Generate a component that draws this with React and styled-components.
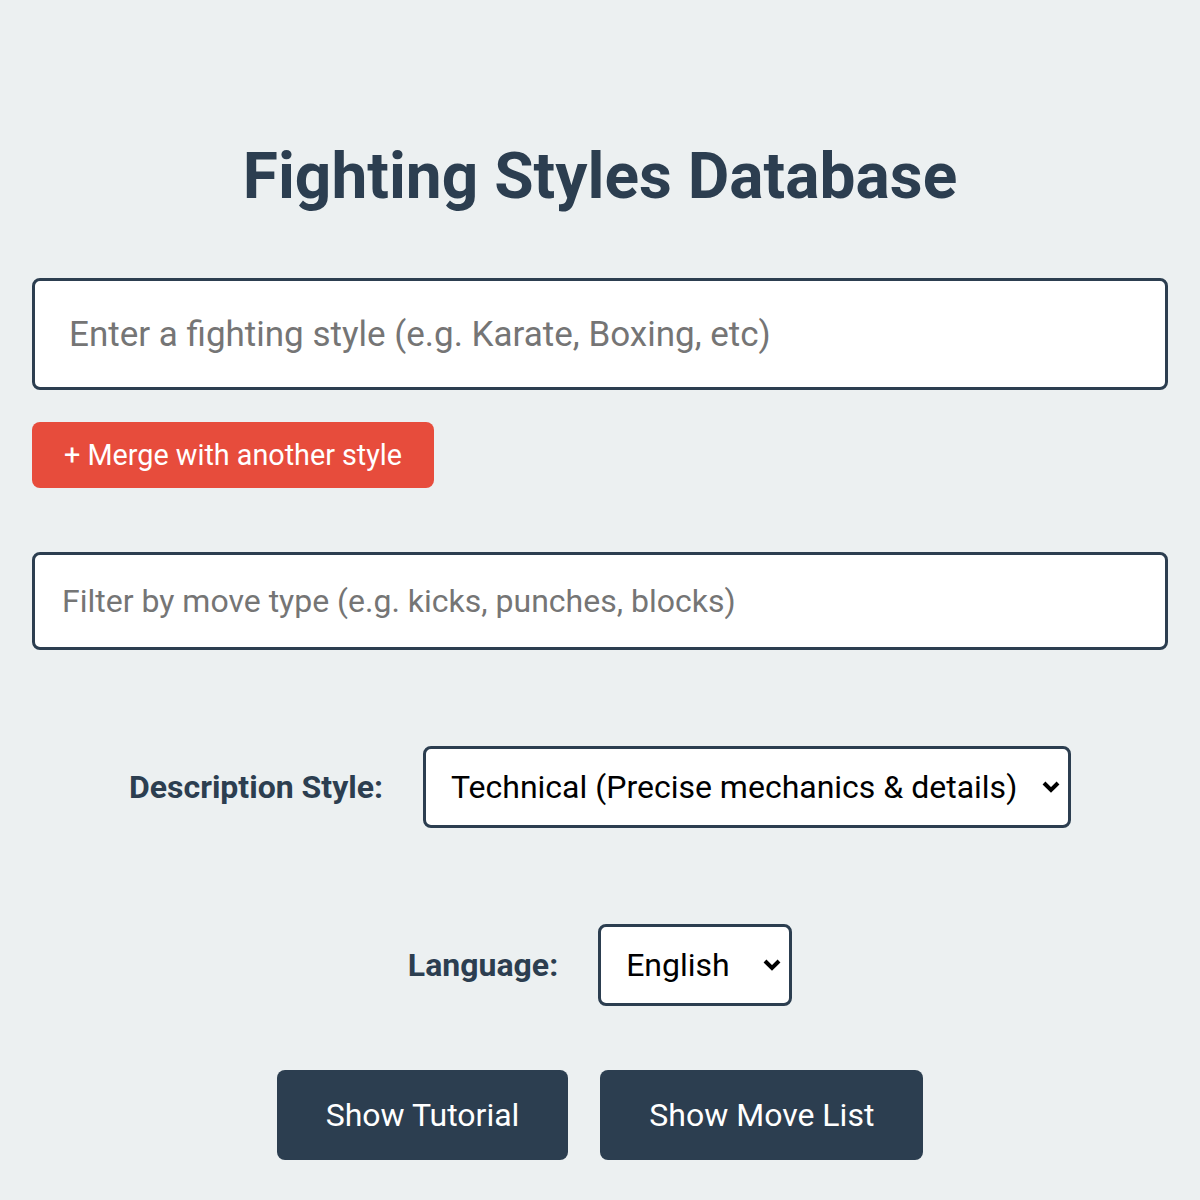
import React, { useState } from "react";
import styled, { createGlobalStyle } from "styled-components";

const GlobalStyle = createGlobalStyle`
  body {
    margin: 0;
    background: #ecf0f1;
    font-family: Roboto, "Liberation Sans", sans-serif;
  }
`;

const Page = styled.div`
  padding: 0 32px 40px;
  display: flex;
  flex-direction: column;
`;

const Title = styled.h1`
  margin: 137px 0 61px;
  text-align: center;
  font-size: 64px;
  line-height: 80px;
  font-weight: 700;
  color: #2c3e50;
`;

const TextInput = styled.input`
  box-sizing: border-box;
  width: 100%;
  height: ${(p) => p.$height}px;
  padding: 0 ${(p) => p.$pad}px;
  border: 3px solid #2c3e50;
  border-radius: 8px;
  background: #fff;
  font-family: inherit;
  font-size: ${(p) => p.$size}px;
  color: #2c3e50;
  outline: none;

  &::placeholder {
    color: #757575;
  }
`;

const MergeButton = styled.button`
  align-self: flex-start;
  height: 66px;
  margin: 32px 0 64px;
  padding: 0 32px;
  border: none;
  border-radius: 8px;
  background: #e74c3c;
  color: #fff;
  font-family: inherit;
  font-size: 28.75px;
  cursor: pointer;
`;

const OptionRow = styled.div`
  display: flex;
  justify-content: center;
  align-items: center;
  gap: 40px;
  margin-top: ${(p) => p.$top}px;
`;

const Label = styled.label`
  font-size: 32px;
  font-weight: 700;
  color: #2c3e50;
`;

const SelectWrap = styled.div`
  position: relative;
  display: inline-flex;
`;

const Select = styled.select`
  box-sizing: border-box;
  width: ${(p) => p.$width}px;
  height: 82px;
  padding: 0 44px 0 25px;
  border: 3px solid #2c3e50;
  border-radius: 8px;
  background: #fff;
  font-family: inherit;
  font-size: 32px;
  color: #000;
  appearance: none;
  -webkit-appearance: none;
  outline: none;
`;

const Chevron = styled.svg`
  position: absolute;
  right: 10px;
  top: 50%;
  transform: translateY(-50%);
  pointer-events: none;
`;

const ButtonRow = styled.div`
  display: flex;
  justify-content: center;
  gap: 32px;
  margin-top: 64px;
`;

const DarkButton = styled.button`
  height: 90px;
  padding: 0 49px;
  border: none;
  border-radius: 8px;
  background: #2c3e50;
  color: #fff;
  font-family: inherit;
  font-size: 32px;
  cursor: pointer;
`;

function Dropdown({ width, defaultValue, children }) {
  return (
    <SelectWrap>
      <Select $width={width} defaultValue={defaultValue}>
        {children}
      </Select>
      <Chevron width="20" height="14" viewBox="0 0 20 14">
        <polyline
          points="3,3 10,10 17,3"
          fill="none"
          stroke="#000"
          strokeWidth="4"
          strokeLinejoin="miter"
        />
      </Chevron>
    </SelectWrap>
  );
}

export default function App() {
  const [style, setStyle] = useState("");
  const [filter, setFilter] = useState("");

  return (
    <>
      <GlobalStyle />
      <Page>
        <Title>Fighting Styles Database</Title>

        <TextInput
          $height={112}
          $pad={34}
          $size={35}
          value={style}
          onChange={(e) => setStyle(e.target.value)}
          placeholder="Enter a fighting style (e.g. Karate, Boxing, etc)"
        />

        <MergeButton>+ Merge with another style</MergeButton>

        <TextInput
          $height={98}
          $pad={27}
          $size={32}
          value={filter}
          onChange={(e) => setFilter(e.target.value)}
          placeholder="Filter by move type (e.g. kicks, punches, blocks)"
        />

        <OptionRow $top={96}>
          <Label>Description Style:</Label>
          <Dropdown width={648} defaultValue="technical">
            <option value="technical">Technical (Precise mechanics &amp; details)</option>
            <option value="simple">Simple</option>
          </Dropdown>
        </OptionRow>

        <OptionRow $top={96}>
          <Label>Language:</Label>
          <Dropdown width={194} defaultValue="en">
            <option value="en">English</option>
            <option value="es">Español</option>
          </Dropdown>
        </OptionRow>

        <ButtonRow>
          <DarkButton>Show Tutorial</DarkButton>
          <DarkButton>Show Move List</DarkButton>
        </ButtonRow>
      </Page>
    </>
  );
}
